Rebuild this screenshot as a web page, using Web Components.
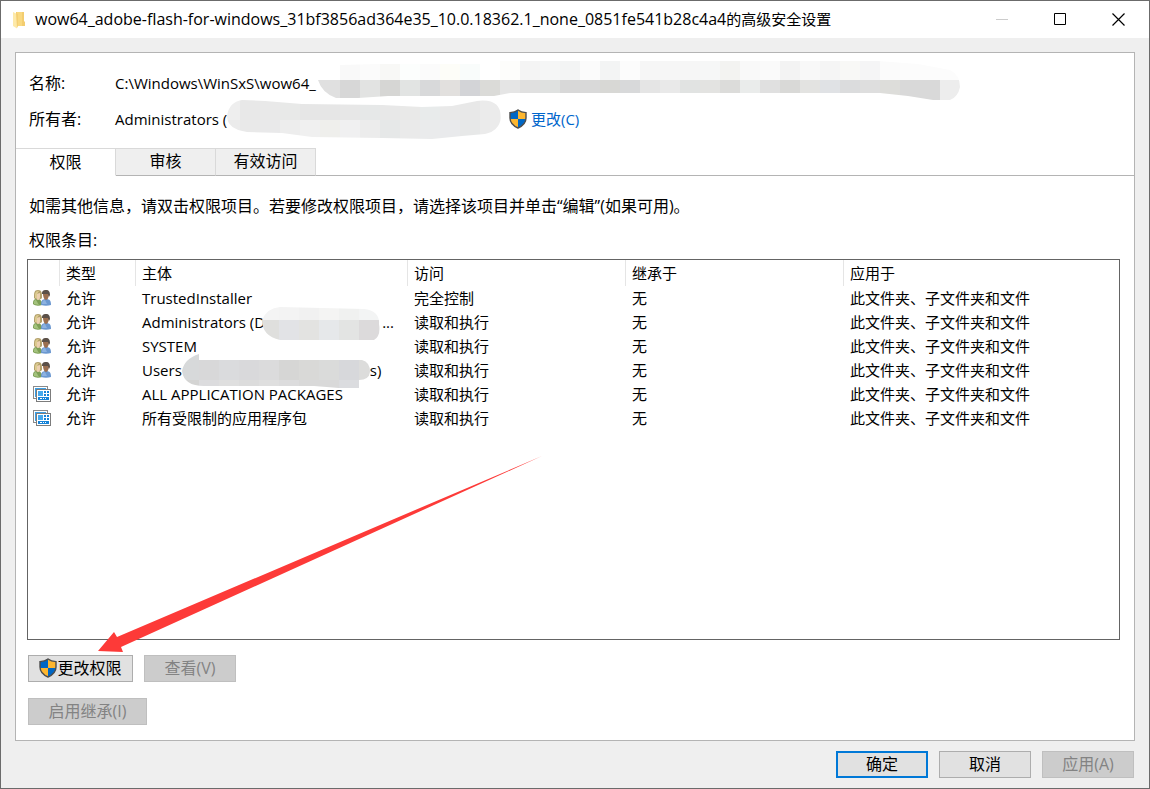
<!DOCTYPE html>
<html lang="zh-CN">
<head>
<meta charset="utf-8">
<title>高级安全设置</title>
<style>
  html, body { height: 100%; margin: 0; }
  body {
    font: 16px/20px "Open Sans", "Noto Sans CJK SC", sans-serif;
    color: #000;
    background: #efefef;
  }
</style>
</head>
<body>
<security-dialog object="wow64_adobe-flash-for-windows_31bf3856ad364e35_10.0.18362.1_none_0851fe541b28c4a4" caption="的高级安全设置">
  <object-field label="名称:">C:\Windows\WinSxS\wow64_<pixel-patch kind="path"></pixel-patch></object-field>
  <object-field label="所有者:">Administrators (<pixel-patch kind="owner"></pixel-patch>
    <shield-link slot="action" href="#change">更改(C)</shield-link>
  </object-field>
  <tab-strip slot="tabs" tabs="权限,审核,有效访问"></tab-strip>
  <permission-page slot="page"></permission-page>
  <push-button slot="footer" default>确定</push-button>
  <push-button slot="footer">取消</push-button>
  <push-button slot="footer" disabled>应用(A)</push-button>
</security-dialog>

<script>
(function () {
  const define = (name, html, setup) => {
    const tpl = document.createElement("template");
    tpl.innerHTML = html;
    customElements.define(name, class extends HTMLElement {
      constructor() {
        super();
        this.attachShadow({ mode: "open" }).appendChild(tpl.content.cloneNode(true));
      }
      connectedCallback() { if (setup) setup(this, this.shadowRoot); }
    });
  };

  // ---- icons ----
  define("uac-shield", `
    <style>:host{display:block;flex:none;width:18px;height:20px} svg{display:block}</style>
    <svg width="18" height="20" viewBox="0 0 18 20" aria-hidden="true">
      <clipPath id="c"><path d="M9 1C7 2.600 4 3.500 1 3.600V9c0 4.500 3 7.800 8 10 5-2.200 8-5.500 8-10V3.600C14 3.500 11 2.600 9 1z"/></clipPath>
      <g clip-path="url(#c)">
        <path fill="#0067c5" d="M0 0h9v10H0zM9 10h9v10H9z"/>
        <path fill="#fdb62f" d="M9 0h9v10H9zM0 10h9v10H0z"/>
      </g>
      <path fill="none" stroke="#4d4d4d" stroke-width="1.400" d="M9 1C7 2.600 4 3.500 1 3.600V9c0 4.500 3 7.800 8 10 5-2.200 8-5.500 8-10V3.600C14 3.500 11 2.600 9 1z"/>
    </svg>`);

  define("folder-icon", `
    <style>:host{display:block;flex:none;width:14px;height:18px} svg{display:block}</style>
    <svg width="14" height="18" viewBox="0 0 14 18" aria-hidden="true">
      <path fill="#f3cd70" d="M3 1h8v9l1 1v4H3z"/>
      <path fill="#f9d981" d="M4 1h5v14H4z"/>
      <path fill="#fde9a9" d="M0 1l4 2v14.500L0 15z"/>
      <path fill="#f4cf74" d="M3 2l2 1v12l-1 2z"/>
    </svg>`);

  define("group-icon", `
    <style>:host{display:block;width:18px;height:16px} svg{display:block}</style>
    <svg width="18" height="16" viewBox="0 0 18 16" aria-hidden="true">
      <path fill="#7d9f55" d="M0 14c0-4 1-5 4-5s5 1 5 6c-3 1-7 1-9-1z"/>
      <path fill="#a3c27c" d="M1 14c0-3 0-4 2-4l3 5z"/>
      <path fill="#b3a06a" d="M1 8c0-5 0-8 4-8s4 3 4 8c-2 2-6 2-8 0z"/>
      <path fill="#ecd0b0" d="M3 4l4-1v4c0 2-1 3-2 3S3 8 3 6z"/>
      <path fill="#dccb90" d="M2 6c0-4 1-5 4-5L4 4v4H2z"/>
      <path fill="#6b98d0" d="M8 15c0-4 1-6 5-6s5 2 5 6c-3 1-7 1-10 0z"/>
      <path fill="#8db2e0" d="M9 14c0-2 1-4 3-4l2 4z"/>
      <path fill="#9b6f50" d="M10 4c0-2 1-3 3-3s3 1 3 3-1 6-3 6-3-4-3-6z"/>
      <path fill="#5b5048" d="M9 4c0-3 1-4 4-4s4 2 4 5l-1 2-1-3h-5z"/>
    </svg>`);

  define("package-icon", `
    <style>:host{display:block;width:18px;height:16px} svg{display:block}</style>
    <svg width="18" height="16" viewBox="0 0 18 16" shape-rendering="crispEdges" aria-hidden="true">
      <path fill="#fff" stroke="#8a8a8a" d="M.5.500h14v12H.5z"/>
      <path fill="#3aa0e8" d="M2 2h11v9H2z"/>
      <path fill="#fff" stroke="#7c7c7c" d="M3.500 3.500h14v12h-14z"/>
      <path fill="#1683d8" d="M5 5h11v9H5z"/>
      <path fill="#45a9ee" d="M5 5h5v5H5z"/>
      <path fill="#fff" d="M10 5h1v5h-1zM13 5h1v5h-1zM11 7h5v1h-5zM5 10h11v1H5zM7 12h2v1H7zM10 12h1v1h-1zM12 12h1v1h-1z"/>
    </svg>`);

  // ---- mosaic over private parts of the names ----
  // rows: [y, height, first x, colours of 20px cells]
  const PATCHES = {
    path: {
      w: 642, h: 40,
      clip: "M0 19H22V4L60 3H182V0H560L600 3L632 9Q642 14 642 26Q640 36 632 39H615L590 35L562 32H192L176 35H70L40 37H18Q4 32 0 19z",
      rows: [
        [0, 19, 2, "fff f9f9f9 fbfbfb f8f8f6 fcfefd fbfbfb fdfdf8 f9fcfb fff fdfdfb f4f4f4 f5f6f6 f3f4f4 fbfbfb f3f4f4 fcfcfc f6f6f6 f6f6f6 f6f6f6 f6f7f7 f3f3f1 f9f9f9 fafafa f3f3f3 f8f8f8 f5f5f5 f8f8f6 f5f5f6 fbfbfb fcfcfc fcfcfc fcfcfc"],
        [19, 21, -18, "e1e1e1 e0e0e0 d7d7d7 e2e3e2 d6d6d4 e2e4e3 d8d9da e2e0de d3d4d7 dbdbd8 e5e5e5 e0e0e0 dfe1e0 d8d8d8 d9d9d9 d8d8d5 d8d9da e5e5e5 e9e9e9 e1e3e2 e3e3e1 dcdcda eaeceb e0e0e0 d9d9d7 e3e3e1 e0e2e5 dbdcdd dedede ddddda d9d9d9 d9d9d9 ededed ededed"]
      ]
    },
    owner: {
      w: 275, h: 39,
      clip: "M0 16Q2 2 15 0L38 1L75 4L155 5L195 7L225 6L250 1Q274 -2 274 18Q272 31 258 34L235 36L205 39L155 38L85 37L55 33L20 32Q0 29 0 16z",
      rows: [
        [0, 20, -7, "eee e8e8e8 e9e9e9 e8e9e8 e6e6e6 e6e6e6 e7e7e7 e6e8e8 e8e8e8 e9e9e8 e8ebeb e9e9e9 e8e8e8 ebebeb f2f2f2"],
        [20, 20, -7, "ebebeb e9e9e9 e9e9ea ededed f0f0f0 efefec f0f0f1 ececec e6e8e8 eaeaea eaebec e9eaec e7e8e8 ebebeb eee"]
      ]
    },
    admin: {
      w: 120, h: 33,
      clip: "M0 13Q5 1 18 0L102 2Q118 4 117 17Q119 29 112 33H18Q0 29 0 13z",
      rows: [
        [0, 13, -3, "f4f4f4 f3f3f3 f1f1f1 f4f4f3 f0f1f0 f3f4f4 f5f5f3"],
        [13, 20, -3, "dfdfdd e2e3e6 e3e3e1 e6e8ea e3e4e3 dcdadb dcdadb"]
      ]
    },
    users: {
      w: 188, h: 35,
      clip: "M0 17Q2 5 17 0V6H180Q188 8 188 18Q187 26 177 26V34H157L132 32H22Q2 32 0 17z",
      rows: [
        [0, 26, -3, "d7d9da d8d8d9 dadbdd d9d9db dbdbdc d6d6d5 d9d9d7 dadbda d7d8db dcdcdb"],
        [26, 9, -3, "d4d4d3 dcdcde dfdfdf dcdcdc dfdfdf dcdcdd d9d9d9 d9d9d9 dbdcdf dcdcdc"]
      ]
    }
  };

  define("pixel-patch", `
    <style>
      svg{display:block}
      :host{display:block}
      :host([kind="path"]),:host([kind="owner"]){position:absolute;top:-12px;left:203px}
      :host([kind="owner"]){top:-9px;left:112px}
    </style>`, (el, root) => {
    const p = PATCHES[el.getAttribute("kind")];
    const cells = p.rows.map(([y, h, x0, colours]) => colours.split(" ").map((c, i) =>
      `<rect x="${x0 + i * 20}" y="${y}" width="20" height="${h}" fill="#${c}"/>`).join("")).join("");
    root.querySelectorAll("svg").forEach(s => s.remove());
    root.appendChild(document.createRange().createContextualFragment(
      `<svg width="${p.w}" height="${p.h}" aria-hidden="true"><clipPath id="m"><path d="${p.clip}"/></clipPath>
       <g clip-path="url(#m)" shape-rendering="crispEdges">${cells}</g></svg>`));
  });

  // ---- controls ----
  define("push-button", `
    <style>
      :host{display:block;min-width:92px}
      button{
        display:flex;align-items:center;justify-content:center;
        width:100%;height:27px;padding:0 8px 2px;box-sizing:border-box;
        font:inherit;color:#000;background:#e1e1e1;border:1px solid #adadad;border-radius:0;
      }
      button:disabled{color:#838383;background:#ccc;border-color:#bfbfbf}
      :host([default]) button{border:2px solid #0078d7}
    </style>
    <button type="button"><slot name="icon"></slot><slot></slot></button>`, (el, root) => {
    root.querySelector("button").disabled = el.hasAttribute("disabled");
  });

  define("shield-link", `
    <style>
      :host{display:block;font-size:15px}
      a{display:flex;align-items:center;gap:4px;color:#0066cc;text-decoration:none}
    </style>
    <a><uac-shield></uac-shield><span><slot></slot></span></a>`, (el, root) => {
    root.querySelector("a").href = el.getAttribute("href");
  });

  define("object-field", `
    <style>
      :host{display:flex;height:20px}
      .label{flex:none;width:86px}
      .value{position:relative;flex:none;min-width:394px;font-size:15px;white-space:nowrap}
    </style>
    <span class="label"></span><span class="value"><slot></slot></span><slot name="action"></slot>`, (el, root) => {
    root.querySelector(".label").textContent = el.getAttribute("label");
  });

  define("tab-strip", `
    <style>
      :host{display:flex;height:28px}
      button{
        width:100px;padding:0 0 2px;box-sizing:border-box;font:inherit;color:#000;
        background:#efefef;border:1px solid #d9d9d9;border-left:0;border-bottom-color:#b4b4b4;border-radius:0;
      }
      button[aria-selected="true"]{background:#fff;border-bottom-color:#fff;padding:0}
      .rest{flex:1;border-bottom:1px solid #b4b4b4}
    </style>`, (el, root) => {
    el.setAttribute("role", "tablist");
    el.getAttribute("tabs").split(",").forEach((name, i) => {
      const b = document.createElement("button");
      b.type = "button";
      b.textContent = name;
      b.setAttribute("role", "tab");
      b.setAttribute("aria-selected", i === 0);
      root.appendChild(b);
    });
    const rest = document.createElement("div");
    rest.className = "rest";
    root.appendChild(rest);
  });

  const ALL = "此文件夹、子文件夹和文件";
  const ENTRIES = [
    ["group", "TrustedInstaller", "完全控制"],
    ["group", `Administrators (D<pixel-patch class="over" kind="admin"></pixel-patch>...`, "读取和执行"],
    ["group", "SYSTEM", "读取和执行"],
    ["group", `Users<pixel-patch kind="users"></pixel-patch>s)`, "读取和执行"],
    ["package", "ALL APPLICATION PACKAGES", "读取和执行"],
    ["package", "所有受限制的应用程序包", "读取和执行"]
  ];

  define("permission-list", `
    <style>
      :host{display:block;border:1px solid #646464;background:#fff;font-size:15px;line-height:24px}
      table{width:100%;table-layout:fixed;border-collapse:separate;border-spacing:0}
      th,td{height:24px;padding:0 0 0 6px;text-align:left;font-weight:400;white-space:nowrap}
      th{height:26px;border-right:1px solid #e5e5e5}
      th:last-child{border-right:0}
      td:first-child{padding-left:5px}
      .icon{width:25px}.type{width:69px}.who{width:265px}.mid{width:211px}
      .name{display:flex;align-items:center;height:24px}
      pixel-patch{position:relative;margin:-5px 0 -7px}
      .over{margin-left:-3px}
    </style>
    <table>
      <thead><tr>
        <th class="icon"></th><th class="type">类型</th><th class="who">主体</th>
        <th class="mid">访问</th><th class="mid">继承于</th><th>应用于</th>
      </tr></thead>
      <tbody></tbody>
    </table>`, (el, root) => {
    root.querySelector("tbody").innerHTML = ENTRIES.map(([icon, who, access]) => `
      <tr><td><${icon}-icon></${icon}-icon></td><td>允许</td><td><div class="name">${who}</div></td>
      <td>${access}</td><td>无</td><td>${ALL}</td></tr>`).join("");
  });

  define("permission-page", `
    <style>
      :host{display:flex;flex-direction:column;flex:1;padding:20px 14px 15px 11px}
      p{margin:0 0 14px 2px}
      p + p{margin-bottom:9px}
      .list{position:relative;display:flex;flex:1;margin-bottom:15px}
      permission-list{flex:1}
      .arrow{position:absolute;left:70px;bottom:-13px;pointer-events:none}
      .row{display:flex;gap:11px;margin:0 0 16px 1px}
      .row:last-child{margin-bottom:0}
      .shield{min-width:105px}
      .wide{min-width:119px}
    </style>
    <p>如需其他信息，请双击权限项目。若要修改权限项目，请选择该项目并单击“编辑”(如果可用)。</p>
    <p>权限条目:</p>
    <div class="list">
      <permission-list></permission-list>
      <svg class="arrow" width="448" height="197" aria-hidden="true">
        <path fill="#fd3a38" d="M1 195L17 176L20 181L445 0L24 191L26 196z"/>
      </svg>
    </div>
    <div class="row">
      <push-button class="shield"><uac-shield slot="icon"></uac-shield>更改权限</push-button>
      <push-button disabled>查看(V)</push-button>
    </div>
    <div class="row"><push-button class="wide" disabled>启用继承(I)</push-button></div>`);

  // ---- window frame ----
  define("security-dialog", `
    <style>
      :host{display:flex;flex-direction:column;min-height:100%;box-sizing:border-box;border:1px solid #6b6b6b;background:#efefef}
      header{display:flex;align-items:center;height:37px;padding:0 2px 0 12px;background:#fff}
      h1{flex:1;margin:0 0 2px 8px;font-size:16px;line-height:20px;font-weight:400;white-space:nowrap}
      .caption{font-size:15px}
      header button{display:flex;align-items:center;justify-content:center;width:58px;height:37px;padding:0;border:0;background:none}
      main{display:flex;flex-direction:column;flex:1;margin:14px 14px 0;border:1px solid #b4b4b4;background:#fff}
      .fields{display:flex;flex-direction:column;gap:16px;padding:20px 13px 19px}
      footer{display:flex;justify-content:flex-end;gap:11px;padding:10px 15px 10px 14px}
    </style>
    <header>
      <folder-icon></folder-icon>
      <h1><span class="object"></span><span class="caption"></span></h1>
      <button type="button" aria-label="最小化" disabled><svg width="13" height="13"><path fill="#ccc" d="M0 6h12v1H0z"/></svg></button>
      <button type="button" aria-label="最大化"><svg width="13" height="13"><path fill="none" stroke="#000" d="M.5.500h11v11H.5z"/></svg></button>
      <button type="button" aria-label="关闭"><svg width="13" height="13"><path fill="none" stroke="#000" stroke-width="1.200" d="M.5.500l12 12M12.500.500l-12 12"/></svg></button>
    </header>
    <main>
      <div class="fields"><slot></slot></div>
      <slot name="tabs"></slot>
      <slot name="page"></slot>
    </main>
    <footer><slot name="footer"></slot></footer>`, (el, root) => {
    root.querySelector(".object").textContent = el.getAttribute("object");
    root.querySelector(".caption").textContent = el.getAttribute("caption");
  });
})();
</script>
</body>
</html>
